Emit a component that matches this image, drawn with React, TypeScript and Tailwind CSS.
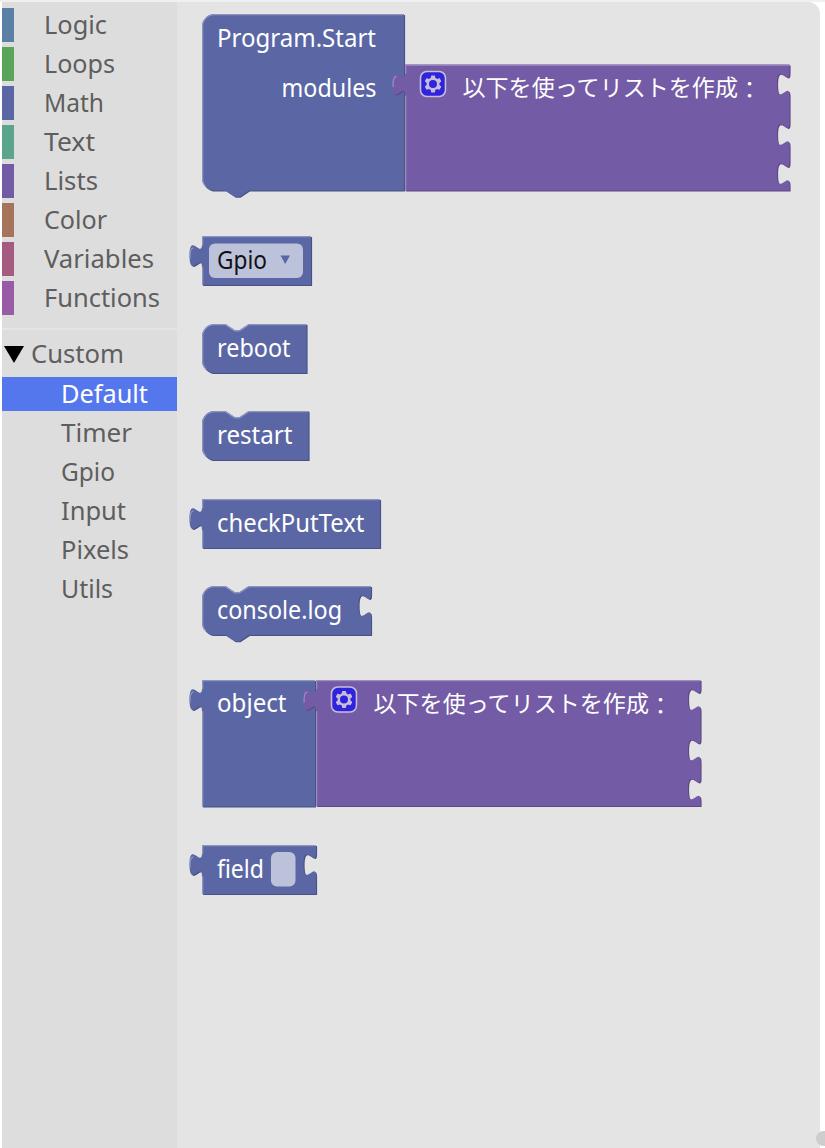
import type { ReactNode } from "react";

const categories = [
  { name: "Logic", color: "bg-[#5b80a5]", width: 63 },
  { name: "Loops", color: "bg-[#5ba55b]", width: 71 },
  { name: "Math", color: "bg-[#5b67a5]", width: 60 },
  { name: "Text", color: "bg-[#5ba58c]", width: 51 },
  { name: "Lists", color: "bg-[#745ba5]", width: 54 },
  { name: "Color", color: "bg-[#a5745b]", width: 63 },
  { name: "Variables", color: "bg-[#a55b80]", width: 110 },
  { name: "Functions", color: "bg-[#995ba5]", width: 116 },
];

const customItems = [
  { name: "Default", width: 87, selected: true },
  { name: "Timer", width: 71 },
  { name: "Gpio", width: 54 },
  { name: "Input", width: 65 },
  { name: "Pixels", width: 68 },
  { name: "Utils", width: 52 },
];

const BLUE = { main: "#5b67a5", dark: "#495284", light: "#8c95c0" };
const PURPLE = { main: "#745ba5", dark: "#5d4984", light: "#9e8cc0" };

// Blockly path units are scaled up to the zoom level of the flyout
const SCALE = 1.56;

const GEAR =
  "m4.203,7.296 0,1.368 -0.92,0.677 -0.11,0.41 0.9,1.59 0.41,0.11 1.043,-0.457 1.187,0.683 0.127,1.134 0.3,0.3 1.8,0 0.3,-0.299 0.127,-1.138 1.185,-0.682 1.046,0.458 0.409,-0.11 0.9,-1.59 -0.11,-0.41 -0.92,-0.677 0,-1.366 0.92,-0.677 0.11,-0.41 -0.9,-1.591 -0.409,-0.109 -1.046,0.458 -1.185,-0.682 -0.127,-1.134 -0.3,-0.3 -1.8,0 -0.3,0.3 -0.126,1.135 -1.187,0.682 -1.043,-0.457 -0.41,0.11 -0.899,1.59 0.108,0.409z M8,5.6 a2.4,2.4 0 1,0 0,4.8 a2.4,2.4 0 1,0 0,-4.8z";

type ShapeProps = {
  w: number;
  h: number;
  palette?: typeof BLUE;
  output?: boolean;
  rounded?: boolean;
  prev?: boolean;
  next?: boolean;
  sockets?: number[];
};

function Shape({ w, h, palette = BLUE, output, rounded, prev, next, sockets = [] }: ShapeProps) {
  const W = (w - 1) / SCALE;
  const H = (h - 1) / SCALE;
  const start = rounded ? "M0,8 A8,8 0 0,1 8,0" : "M0,0";
  const top = prev ? "H15 l6,4 3,0 6,-4" : "";
  const right = sockets
    .map((s) => `V${s / SCALE + 5} c0,10 -8,-8 -8,7.5 s8,-2.5 8,7.5`)
    .join(" ");
  const bottom = `V${H} ${next ? "H30 l-6,4 -3,0 -6,-4" : ""}`;
  const left = rounded ? `H8 A8,8 0 0,1 0,${H - 8}` : "H0";
  const tab = output ? "V20 c0,-10 -8,8 -8,-7.5 s8,2.5 8,-7.5" : "";
  const d = `${start} ${top} H${W} ${right} ${bottom} ${left} ${tab} Z`;
  const light = rounded
    ? `M2.7,${H - 2.3} A7.5,7.5 0 0,1 0.4,${H - 8} V8 A7.6,7.6 0 0,1 8,0.4 ${prev ? "H15 l6,4 3,0 6,-4" : ""} H${W}`
    : output
      ? `M0.4,${H} V20 M-7.6,14.5 Q-8,8 -5.5,7.6 M0.4,6 V0.4 H${W}`
      : `M0.4,${H} V0.4 H${W}`;

  return (
    <g transform={`scale(${SCALE})`}>
      <path d={d} fill={palette.dark} transform="translate(0.7 0.7)" />
      <path d={d} fill={palette.main} />
      <path d={light} fill="none" stroke={palette.light} strokeWidth="0.8" />
    </g>
  );
}

type LabelProps = { x: number; y: number; w: number; children: ReactNode; fill?: string };

function Label({ x, y, w, children, fill = "#fff" }: LabelProps) {
  return (
    <text
      x={x}
      y={y}
      textLength={w}
      lengthAdjust="spacingAndGlyphs"
      fill={fill}
      className="font-['Noto_Sans','Noto_Sans_CJK_JP',sans-serif] text-[24.5px]"
    >
      {children}
    </text>
  );
}

function ListBlock({ x, y }: { x: number; y: number }) {
  return (
    <g transform={`translate(${x} ${y})`}>
      <Shape w={385.5} h={127} palette={PURPLE} output sockets={[0, 50.5, 89.5]} />
      <g transform={`translate(15.5 7) scale(${SCALE})`} opacity="0.6">
        <rect width="16" height="16" rx="4" fill="#00f" stroke="#fff" />
        <path d={GEAR} fill="#fff" fillRule="evenodd" transform="translate(-0.56 -0.56) scale(1.07)" />
      </g>
      <text
        x={57.5}
        y={31.5}
        textLength={298.5}
        lengthAdjust="spacingAndGlyphs"
        fill="#fff"
        className="font-['Noto_Sans_CJK_JP',sans-serif] text-[23px]"
      >
        以下を使ってリストを作成<tspan dy="2">：</tspan>
      </text>
    </g>
  );
}

function Block({ w, h, className, children }: { w: number; h: number; className?: string; children: ReactNode }) {
  return (
    <div className={className}>
      <svg width={w} height={h} className="block overflow-visible">
        {children}
      </svg>
    </div>
  );
}

function RowLabel({ name, width, className = "" }: { name: string; width: number; className?: string }) {
  return (
    <svg width={width} height="34" className={`block overflow-visible ${className}`}>
      <text
        x="0"
        y="26.3"
        textLength={width}
        lengthAdjust="spacingAndGlyphs"
        className="fill-current font-['Noto_Sans',sans-serif] text-[25.5px]"
      >
        {name}
      </text>
    </svg>
  );
}

function Toolbox() {
  return (
    <nav className="w-[174.5px] shrink-0 bg-[#ddd] pt-[6px] text-[#5e5e5e]">
      <ul className="flex flex-col gap-[5px]">
        {categories.map((cat) => (
          <li key={cat.name} className="flex h-[34px]">
            <div className={`w-[12px] ${cat.color}`} />
            <RowLabel name={cat.name} width={cat.width} className="ml-[30px]" />
          </li>
        ))}
      </ul>
      <div className="mt-[13px] mb-[7px] h-[2px] bg-[#e5e5e5]" />
      <div className="flex h-[34px] items-center">
        <svg width="20" height="17" viewBox="0 0 20 17" className="ml-[2px]">
          <path d="M0,0 H20 L10,17 Z" fill="#000" />
        </svg>
        <RowLabel name="Custom" width={93} className="ml-[7px]" />
      </div>
      <ul className="mt-[5.5px] flex flex-col gap-[5px]">
        {customItems.map((item) => (
          <li key={item.name} className={`flex h-[34px] pl-[59px] ${item.selected ? "bg-[#5577ee] text-white" : ""}`}>
            <RowLabel name={item.name} width={item.width} />
          </li>
        ))}
      </ul>
    </nav>
  );
}

function Flyout() {
  return (
    <section className="w-[643.5px] rounded-tr-[12px] bg-[#e4e4e4] pt-[12px] pl-[25.5px]">
      <Block w={589} h={177}>
        <Shape w={203} h={177.5} rounded next />
        <Label x={15} y={32.5} w={159}>Program.Start</Label>
        <Label x={79.5} y={82.5} w={95}>modules</Label>
        <ListBlock x={203} y={50.5} />
      </Block>

      <Block w={110} h={49} className="mt-[45px]">
        <Shape w={110} h={50} output />
        <rect x="7" y="7.5" width="94" height="34.5" rx="6" fill="#bdc2db" />
        <Label x={15} y={32.5} w={50} fill="#111">Gpio</Label>
        <path d="M78.5,19.5 H88 L83.2,28 Z" fill="#5b67a5" />
      </Block>

      <Block w={105.5} h={49} className="mt-[38.5px]">
        <Shape w={105.5} h={50} rounded prev />
        <Label x={15} y={32.5} w={73.5}>reboot</Label>
      </Block>

      <Block w={107.5} h={49} className="mt-[38.5px]">
        <Shape w={107.5} h={50} rounded prev />
        <Label x={15} y={32.5} w={75.5}>restart</Label>
      </Block>

      <Block w={179} h={49} className="mt-[38.5px]">
        <Shape w={179} h={50} output />
        <Label x={15} y={32.5} w={147.5}>checkPutText</Label>
      </Block>

      <Block w={170} h={49} className="mt-[38.5px]">
        <Shape w={170} h={50} rounded prev next sockets={[0]} />
        <Label x={15} y={32.5} w={125}>console.log</Label>
      </Block>

      <Block w={499} h={127} className="mt-[44.5px]">
        <Shape w={114} h={127.5} output />
        <Label x={15} y={32} w={69.5}>object</Label>
        <ListBlock x={114} y={0} />
      </Block>

      <Block w={115} h={49} className="mt-[38.5px]">
        <Shape w={115} h={50} output sockets={[0]} />
        <Label x={15} y={32.5} w={47}>field</Label>
        <rect x="69" y="7" width="24.5" height="34.5" rx="6" fill="#bdc2db" />
      </Block>
    </section>
  );
}

export default function App() {
  return (
    <div className="relative flex h-[1148px] w-[825px] overflow-hidden border-t-2 border-[#f0f0f0] bg-white pl-[2px]">
      <Toolbox />
      <Flyout />
      {/* Workspace scrollbar peeking out behind the flyout */}
      <div className="absolute top-[1129px] left-[816px] h-[15px] w-[20px] rounded-full bg-[#cdcdcd]" />
    </div>
  );
}
